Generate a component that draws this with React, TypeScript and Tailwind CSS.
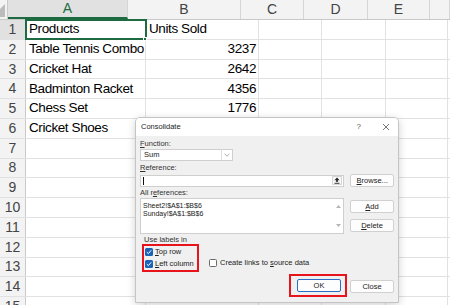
import React from 'react'

const cols = [
  { id: 'A', w: 'w-[120px]' },
  { id: 'B', w: 'w-[113px]' },
  { id: 'C', w: 'w-[63px]' },
  { id: 'D', w: 'w-[64px]' },
  { id: 'E', w: 'w-[62px]' },
  { id: '', w: 'w-[20px]' },
]

const rows: [string, string][] = [
  ['Products', 'Units Sold'],
  ['Table Tennis Combo', '3237'],
  ['Cricket Hat', '2642'],
  ['Badminton Racket', '4356'],
  ['Chess Set', '1776'],
  ['Cricket Shoes', ''],
]

function Check({ on }: { on: boolean }) {
  if (!on) return <span className="w-[8px] h-[8px] rounded-[1.5px] border border-[#6b6b6b] bg-white shrink-0" />
  return (
    <span className="w-[8px] h-[8px] rounded-[1.5px] bg-[#1a64b8] flex items-center justify-center shrink-0">
      <svg width="6" height="6" viewBox="0 0 6 6">
        <path d="M0.8 3.1 L2.4 4.6 L5.2 1.3" stroke="white" strokeWidth="1" fill="none" />
      </svg>
    </span>
  )
}

function Btn({ children, primary }: { children: React.ReactNode; primary?: boolean }) {
  return (
    <div
      className={
        'w-[44px] h-[13px] rounded-[2px] bg-[#fdfdfd] flex items-center justify-center text-[7.5px] text-[#222] whitespace-nowrap ' +
        (primary ? 'border border-[#2a6fc4]' : 'border border-[#d0d0d0]')
      }
    >
      {children}
    </div>
  )
}

function Dialog() {
  return (
    <div className="absolute left-[135px] top-[117px] w-[264px] h-[186px] bg-[#f0f0f0] border border-[#c4c4c4] rounded-t-[5px] shadow-[0_2px_8px_rgba(0,0,0,0.18)] overflow-hidden font-['Liberation_Sans',sans-serif] text-[7.5px] text-[#222] leading-none whitespace-nowrap">
      <div className="h-[18px] bg-white flex items-center pl-[5px] pr-[8px]">
        <span className="text-[7.5px]">Consolidate</span>
        <span className="ml-auto mr-[21px] text-[8px] text-[#555]">?</span>
        <svg width="8" height="8" viewBox="0 0 8 8">
          <path d="M1 1 L7 7 M7 1 L1 7" stroke="#555" strokeWidth="0.8" />
        </svg>
      </div>
      <div className="pl-[4px] pr-[4px] flex flex-col">
        <div className="mt-[4px] h-[9px] text-[#333]"><u>F</u>unction:</div>
        <div className="w-[93px] h-[12px] bg-white border border-[#cfcfcf] flex items-center pl-[3px]">
          <span>Sum</span>
          <div className="ml-auto w-[11px] h-[10px] border-l border-[#dedede] flex items-center justify-center">
            <svg width="6" height="4" viewBox="0 0 6 4">
              <path d="M0.5 0.8 L3 3.2 L5.5 0.8" stroke="#999" strokeWidth="0.8" fill="none" />
            </svg>
          </div>
        </div>
        <div className="mt-[3px] h-[9px] text-[#333]"><u>R</u>eference:</div>
        <div className="mt-[1px] flex items-center gap-[6px]">
          <div className="w-[206px] h-[12px] bg-white border border-[#cfcfcf] flex items-center pl-[2px]">
            <span className="w-px h-[8px] bg-[#111]" />
            <div className="ml-auto mr-[1px] w-[10px] h-[9px] border border-[#d6d6d6] bg-[#f7f7f7] flex items-center justify-center">
              <svg width="6" height="7" viewBox="0 0 6 7">
                <path d="M3 0.5 L5.5 3.2 L3.8 3.2 L3.8 5 L2.2 5 L2.2 3.2 L0.5 3.2 Z" fill="#222" />
                <rect x="0.5" y="5.8" width="5" height="0.9" fill="#222" />
              </svg>
            </div>
          </div>
          <Btn><u>B</u>rowse...</Btn>
        </div>
        <div className="mt-[2px] h-[9px] text-[#333]">All r<u>e</u>ferences:</div>
        <div className="flex gap-[6px]">
          <div className="w-[206px] h-[36px] bg-white border border-[#cfcfcf] flex">
            <div className="flex-1 pl-[2px] pt-[3px] flex flex-col gap-[1px] text-[7px]">
              <span>Sheet2!$A$1:$B$6</span>
              <span>Sunday!$A$1:$B$6</span>
            </div>
            <div className="w-[9px] flex flex-col items-center justify-between py-[6px]">
              <svg width="5" height="3" viewBox="0 0 5 3"><path d="M0 3 L2.5 0 L5 3 Z" fill="#b5b5b5" /></svg>
              <svg width="5" height="3" viewBox="0 0 5 3"><path d="M0 0 L2.5 3 L5 0 Z" fill="#b5b5b5" /></svg>
            </div>
          </div>
          <div className="flex flex-col pt-[2px] gap-[6px]">
            <Btn><u>A</u>dd</Btn>
            <Btn><u>D</u>elete</Btn>
          </div>
        </div>
        <div className="mt-[1px] ml-[4px] h-[9px] text-[#333] flex items-center">Use labels in</div>
        <div className="flex items-end">
          <div className="ml-[2px] w-[57px] h-[28px] border-2 border-[#e8141c] flex flex-col justify-center gap-[4px] pl-[1px]">
            <div className="flex items-center gap-[2px]"><Check on /><span><u>T</u>op row</span></div>
            <div className="flex items-center gap-[2px]"><Check on /><span><u>L</u>eft column</span></div>
          </div>
          <div className="ml-[10px] mb-[5px] flex items-center gap-[3px]">
            <Check on={false} />
            <span>Create links to <u>s</u>ource data</span>
          </div>
        </div>
        <div className="flex justify-end items-end gap-[3px] mt-[2px]">
          <div className="w-[58px] h-[23px] border-2 border-[#e8141c] flex items-center pl-[6px]">
            <Btn primary>OK</Btn>
          </div>
          <div className="mb-[4px]"><Btn>Close</Btn></div>
        </div>
      </div>
    </div>
  )
}

export default function App() {
  return (
    <div className="relative w-[450px] h-[305px] overflow-hidden bg-white font-['Liberation_Sans',sans-serif]">
      <div className="flex h-[20px] bg-[#f3f3f3] border-b border-[#c9c9c9]">
        <div className="w-[26px] border-r border-[#c9c9c9] relative">
          <svg className="absolute right-[2px] bottom-[2px]" width="13" height="13" viewBox="0 0 13 13">
            <path d="M13 0 L13 13 L0 13 Z" fill="#bcbcbc" />
          </svg>
        </div>
        {cols.map((c) => (
          <div
            key={c.id + c.w}
            className={
              c.w +
              ' shrink-0 flex items-center justify-center text-[14px] border-r border-[#d6d6d6] ' +
              (c.id === 'A' ? 'bg-[#e1e1e1] text-[#1e6b41] border-b-2 border-b-[#1e6b41]' : 'text-[#444]')
            }
          >
            {c.id}
          </div>
        ))}
      </div>
      {Array.from({ length: 15 }).map((_, i) => {
        const r = rows[i]
        return (
          <div key={i} className="flex h-[19.8px] border-b border-[#e1e1e1]">
            <div
              className={
                'w-[26px] shrink-0 flex items-center justify-center text-[14px] text-[#444] border-r border-[#c9c9c9] ' +
                (i === 0 ? 'bg-[#e1e1e1]' : 'bg-[#f3f3f3]')
              }
            >
              {i + 1}
            </div>
            {cols.map((c, j) => (
              <div
                key={j}
                className={
                  c.w +
                  ' shrink-0 flex items-center whitespace-nowrap text-[13.5px] text-black tracking-[-0.4px] border-r border-[#e1e1e1] ' +
                  (j === 1 && i > 0 ? 'justify-end pr-[2px] ' : 'pl-[3px] ') +
                  (i === 0 && j === 0 ? 'outline-2 outline-[#1e6b41] -outline-offset-1 relative' : '')
                }
              >
                {r && j === 0 ? r[0] : r && j === 1 ? r[1] : ''}
                {i === 0 && j === 0 && <span className="absolute -right-[2px] -bottom-[2px] w-[4px] h-[4px] bg-[#1e6b41] border border-white" />}
              </div>
            ))}
          </div>
        )
      })}
      <Dialog />
    </div>
  )
}
